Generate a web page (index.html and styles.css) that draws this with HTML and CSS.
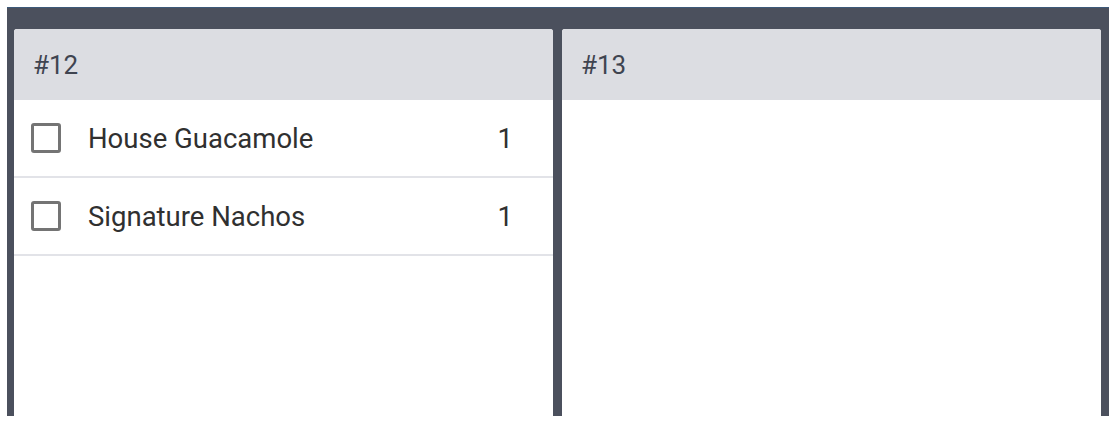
FILE: index.html
```html
<!DOCTYPE html>
<html>
<head>
<meta charset="utf-8">
<link rel="stylesheet" href="styles.css">
</head>
<body>
<div class="board">
  <section class="ticket">
    <header class="ticket-head">#12</header>
    <ul class="items">
      <li class="item"><span class="check"></span><span class="name">House Guacamole</span><span class="qty">1</span></li>
      <li class="item"><span class="check"></span><span class="name">Signature Nachos</span><span class="qty">1</span></li>
    </ul>
  </section>
  <section class="ticket">
    <header class="ticket-head">#13</header>
    <ul class="items"></ul>
  </section>
</div>
</body>
</html>
```
FILE: styles.css
```css
html, body { margin: 0; padding: 0; background: #ffffff; }
body { padding: 7px 9px 16px 7px; font-family: Roboto, "Noto Sans", sans-serif; }
.board {
  height: 409px;
  background: #4b505d;
  border-top: 1px solid #3d5a7a;
  box-sizing: border-box;
  padding: 21px 8px 0 7px;
  display: grid;
  grid-template-columns: 539px 539px;
  column-gap: 9px;
}
.ticket {
  background: #ffffff;
  border-radius: 3px 3px 0 0;
  overflow: hidden;
  display: flex;
  flex-direction: column;
}
.ticket-head {
  height: 71px;
  background: #dcdde2;
  color: #3f4450;
  font-size: 26px;
  padding-left: 19px;
  display: flex;
  align-items: center;
}
.items { list-style: none; margin: 0; padding: 0; }
.item {
  height: 76px;
  border-bottom: 2px solid #e2e3e8;
  display: flex;
  align-items: center;
  padding: 0 40px 0 17px;
  color: #303030;
  font-size: 27.5px;
}
.check {
  width: 24px; height: 24px;
  border: 3px solid #747474;
  border-radius: 3px;
  flex: none;
}
.name { margin-left: 27px; flex: 1; }
```
